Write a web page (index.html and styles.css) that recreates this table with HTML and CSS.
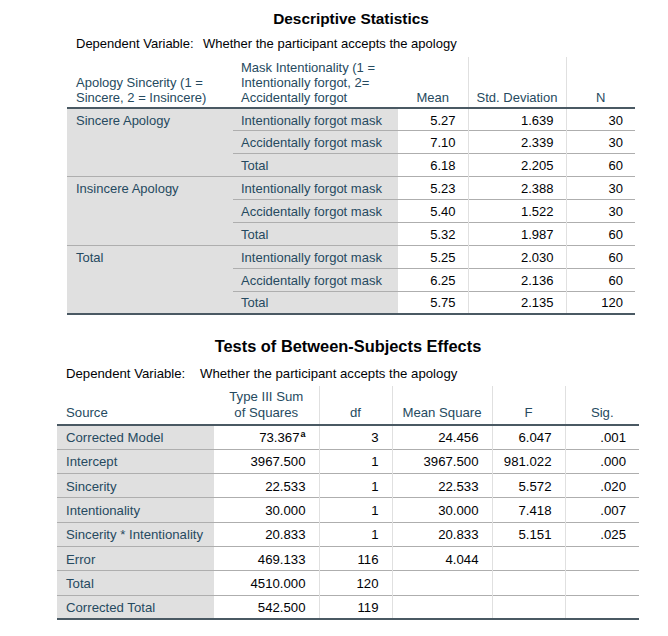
FILE: index.html
```html
<!DOCTYPE html>
<html>
<head>
<meta charset="utf-8">
<link rel="stylesheet" href="styles.css">
</head>
<body>
<div class="report">
  <section class="pivot pivot-desc">
    <h1 class="title">Descriptive Statistics</h1>
    <p class="caption"><span class="cap-label cap-desc">Dependent Variable:</span><span>Whether the participant accepts the apology</span></p>
    <table class="grid desc">
      <colgroup>
        <col class="c166"><col class="c165"><col class="c70"><col class="c98"><col class="c69">
      </colgroup>
      <thead>
        <tr>
          <th class="corner">Apology Sincerity (1 =<br>Sincere, 2 = Insincere)</th>
          <th class="corner">Mask Intentionality (1 =<br>Intentionally forgot, 2=<br>Accidentally forgot</th>
          <th class="colhead first">Mean</th>
          <th class="colhead">Std. Deviation</th>
          <th class="colhead">N</th>
        </tr>
      </thead>
      <tbody>
        <tr class="group-start">
          <th class="rowlab" rowspan="3">Sincere Apology</th>
          <th class="rowlab sub">Intentionally forgot mask</th>
          <td class="first">5.27</td><td>1.639</td><td>30</td>
        </tr>
        <tr>
          <th class="rowlab sub">Accidentally forgot mask</th>
          <td class="first">7.10</td><td>2.339</td><td>30</td>
        </tr>
        <tr>
          <th class="rowlab sub">Total</th>
          <td class="first">6.18</td><td>2.205</td><td>60</td>
        </tr>
        <tr class="group-start">
          <th class="rowlab" rowspan="3">Insincere Apology</th>
          <th class="rowlab sub">Intentionally forgot mask</th>
          <td class="first">5.23</td><td>2.388</td><td>30</td>
        </tr>
        <tr>
          <th class="rowlab sub">Accidentally forgot mask</th>
          <td class="first">5.40</td><td>1.522</td><td>30</td>
        </tr>
        <tr>
          <th class="rowlab sub">Total</th>
          <td class="first">5.32</td><td>1.987</td><td>60</td>
        </tr>
        <tr class="group-start">
          <th class="rowlab" rowspan="3">Total</th>
          <th class="rowlab sub">Intentionally forgot mask</th>
          <td class="first">5.25</td><td>2.030</td><td>60</td>
        </tr>
        <tr>
          <th class="rowlab sub">Accidentally forgot mask</th>
          <td class="first">6.25</td><td>2.136</td><td>60</td>
        </tr>
        <tr>
          <th class="rowlab sub">Total</th>
          <td class="first">5.75</td><td>2.135</td><td>120</td>
        </tr>
      </tbody>
    </table>
  </section>

  <section class="pivot pivot-tests">
    <h1 class="title">Tests of Between-Subjects Effects</h1>
    <p class="caption"><span class="cap-label cap-tests">Dependent Variable:</span><span>Whether the participant accepts the apology</span></p>
    <table class="grid tests">
      <colgroup>
        <col class="c157"><col class="c105"><col class="c73"><col class="c100"><col class="c73"><col class="c74">
      </colgroup>
      <thead>
        <tr>
          <th class="corner">Source</th>
          <th class="colhead first">Type III Sum<br>of Squares</th>
          <th class="colhead">df</th>
          <th class="colhead">Mean Square</th>
          <th class="colhead">F</th>
          <th class="colhead">Sig.</th>
        </tr>
      </thead>
      <tbody>
        <tr><th class="rowlab">Corrected Model</th><td class="first">73.367<sup class="fn">a</sup></td><td>3</td><td>24.456</td><td>6.047</td><td>.001</td></tr>
        <tr><th class="rowlab">Intercept</th><td class="first">3967.500</td><td>1</td><td>3967.500</td><td>981.022</td><td>.000</td></tr>
        <tr><th class="rowlab">Sincerity</th><td class="first">22.533</td><td>1</td><td>22.533</td><td>5.572</td><td>.020</td></tr>
        <tr><th class="rowlab">Intentionality</th><td class="first">30.000</td><td>1</td><td>30.000</td><td>7.418</td><td>.007</td></tr>
        <tr><th class="rowlab">Sincerity * Intentionality</th><td class="first">20.833</td><td>1</td><td>20.833</td><td>5.151</td><td>.025</td></tr>
        <tr><th class="rowlab">Error</th><td class="first">469.133</td><td>116</td><td>4.044</td><td></td><td></td></tr>
        <tr><th class="rowlab">Total</th><td class="first">4510.000</td><td>120</td><td></td><td></td><td></td></tr>
        <tr><th class="rowlab">Corrected Total</th><td class="first">542.500</td><td>119</td><td></td><td></td><td></td></tr>
      </tbody>
    </table>
  </section>
</div>
</body>
</html>
```

FILE: styles.css
```css
html, body {
  margin: 0;
  padding: 0;
  background: #ffffff;
}

body {
  font-family: "Liberation Sans", Arial, sans-serif;
  font-size: 13px;
  color: #010205;
}

.report {
  padding-top: 9px;
}

.pivot-desc {
  margin-left: 67px;
  width: 568px;
}

.pivot-tests {
  margin-left: 57px;
  width: 582px;
  margin-top: 21px;
  font-size: 13.2px;
}

.title {
  margin: 0;
  font-size: 15.4px;
  font-weight: bold;
  line-height: 20px;
  text-align: center;
  color: #010205;
}

.pivot-tests .title {
  font-size: 16.4px;
}

.caption {
  margin: 7px 0 5px 0;
  padding-left: 9px;
  line-height: 16px;
  white-space: nowrap;
}

.pivot-tests .caption {
  margin: 10px 0 4px 0;
}

.cap-label {
  display: inline-block;
}

.cap-desc { width: 127px; }
.cap-tests { width: 134px; }

.grid {
  border-collapse: collapse;
  table-layout: fixed;
  width: 100%;
}

.c166 { width: 166px; }
.c165 { width: 165px; }
.c70 { width: 70px; }
.c98 { width: 98px; }
.c69 { width: 69px; }
.c157 { width: 157px; }
.c105 { width: 105px; }
.c73 { width: 73px; }
.c100 { width: 100px; }
.c74 { width: 74px; }

.grid th,
.grid td {
  padding: 0;
  font-weight: normal;
  white-space: nowrap;
  overflow: visible;
}

.grid thead th {
  vertical-align: bottom;
  color: #264a60;
  border-bottom: 2px solid #4a5963;
}

.desc thead th {
  line-height: 15px;
  padding: 3px 0 2px 0;
}

.tests thead th {
  line-height: 16px;
  padding: 3px 0 3px 0;
}

.grid th.corner {
  text-align: left;
  padding-left: 9px;
}

.desc th.corner + th.corner {
  padding-left: 8px;
}

.grid th.colhead {
  text-align: center;
  border-left: 1px solid #e0e0e0;
}

.grid th.colhead.first {
  border-left: none;
}

.grid tbody th.rowlab {
  background: #e0e0e0;
  color: #264a60;
  text-align: left;
  vertical-align: top;
  padding-left: 9px;
  border-top: 1px solid #aeaeae;
}

.desc tbody th.rowlab.sub {
  padding-left: 8px;
  vertical-align: middle;
}

.grid tbody td {
  text-align: right;
  padding-right: 12px;
  border-top: 1px solid #aeaeae;
  border-left: 1px solid #e0e0e0;
  color: #010205;
  vertical-align: middle;
}

.grid tbody td.first {
  border-left: none;
}

.tests tbody td {
  padding-right: 13px;
}

.desc tbody tr {
  height: 22.9px;
}

.desc tbody th,
.desc tbody td {
  padding-top: 1px;
}

.desc tbody th.rowlab[rowspan] {
  line-height: 22px;
}

.tests tbody tr {
  height: 24.3px;
}

.tests tbody th.rowlab {
  vertical-align: middle;
}

.tests tbody th,
.tests tbody td {
  padding-top: 1px;
}

.grid tbody tr:first-child th,
.grid tbody tr:first-child td {
  border-top: none;
}

.grid tbody tr:last-child th,
.grid tbody tr:last-child td {
  border-bottom: 2px solid #4a5963;
}

.desc tbody tr:nth-child(7) th[rowspan] {
  border-bottom: 2px solid #4a5963;
}

.fn {
  font-size: 9px;
  font-weight: bold;
  line-height: 0;
  vertical-align: 5px;
  margin-left: 1px;
}
```
